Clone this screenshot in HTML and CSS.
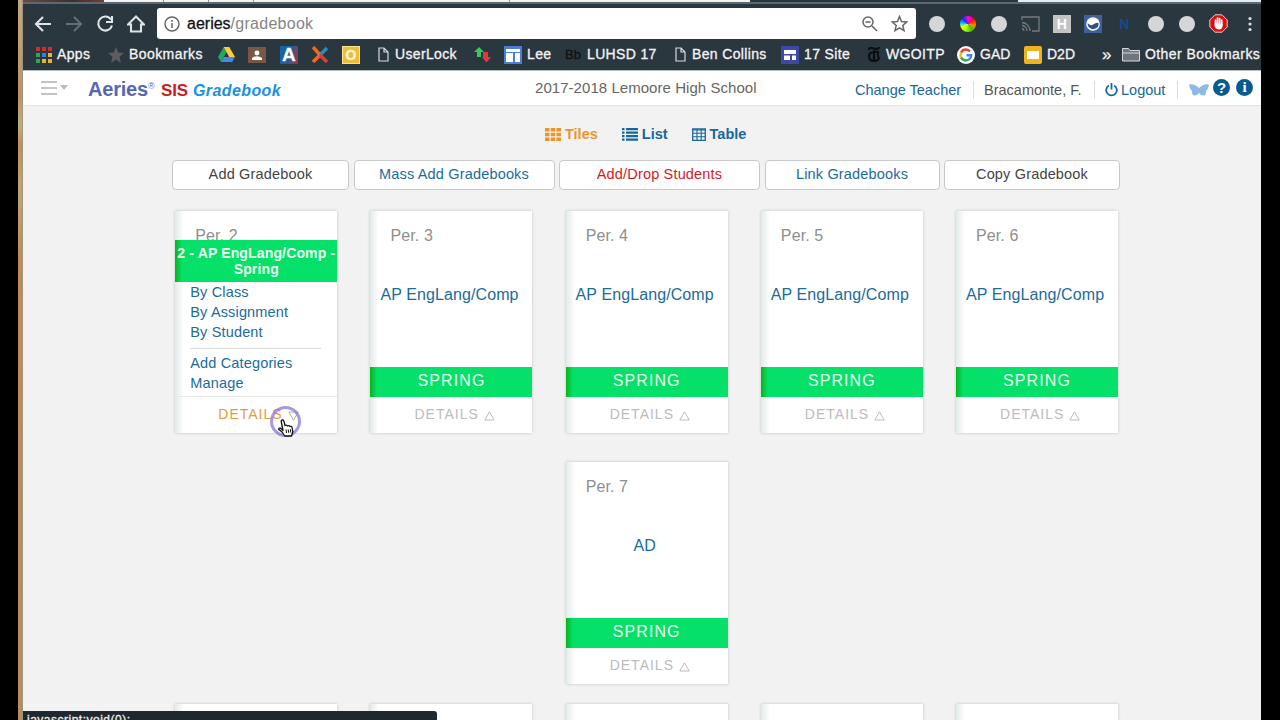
FILE: index.html
```html
<!DOCTYPE html>
<html lang="en">
<head>
    <meta charset="UTF-8">
    <title>Aeries Gradebook</title>
    <link rel="stylesheet" href="styles.css">
</head>
<body>
<div class="desktop"></div>
<div class="browser">
    <div class="tabs"><i class="photo"></i><i class="tab t1"></i><i class="tab t2"></i><i class="tab t3"></i><i class="tab t4"></i><i class="active"></i><i class="tab t5"></i></div>

    <div class="toolbar">
        <div class="nav">
            <svg width="18" height="18" viewBox="0 0 18 18"><path d="M17 9H2M9 2L2 9l7 7"/></svg>
            <svg class="dim" width="18" height="18" viewBox="0 0 18 18"><path d="M1 9h15M9 2l7 7-7 7"/></svg>
            <svg width="18" height="18" viewBox="0 0 18 18"><path d="M15 4.500A7 7 0 1 0 16 10.500M16 1v6h-6"/></svg>
            <svg width="18" height="18" viewBox="0 0 18 18"><path d="M1 9.500L9 1.500l8 8h-3v7H4v-7z"/></svg>
        </div>
        <div class="omnibox">
            <svg width="16" height="16" viewBox="0 0 16 16"><circle cx="8" cy="8" r="7"/><path d="M8 7v5M8 4v1.700"/></svg>
            <span class="url"><b>aeries</b>/gradebook</span>
            <svg width="17" height="17" viewBox="0 0 17 17"><circle cx="7" cy="7" r="5"/><path d="M4.500 7h5M11 11l5 5"/></svg>
            <svg width="17" height="17" viewBox="0 0 17 17"><path d="M8.500 1.500l2 5 5.300.4-4 3.500 1.200 5.200-4.500-2.800L4 15.600l1.200-5.200-4-3.500 5.300-.4z"/></svg>
        </div>
        <div class="extensions">
            <i class="ball"></i>
            <i class="wheel"></i>
            <i class="ball"></i>
            <svg width="19" height="16" viewBox="0 0 19 16" fill="none" stroke="#77797c" stroke-width="1.300"><path d="M1 4V1h17v14h-7M1 6.500a8.500 8.500 0 0 1 8 8.500M1 9.500A5.500 5.500 0 0 1 6 15M1 12.500A2.500 2.500 0 0 1 3 15"/></svg>
            <b class="ext-h">H</b>
            <svg width="18" height="18" viewBox="0 0 18 18"><path fill="#3f619b" d="M0 0h18v18H0z"/><circle cx="9" cy="9" r="6.800" fill="#fff"/><path fill="#34517f" d="M3.500 8q3 3.500 6 1.300T14.500 8q1 5.500-5.500 6.300Q3.500 13.500 3.500 8z"/></svg>
            <b class="ext-n">N</b>
            <i class="ball"></i>
            <i class="ball"></i>
            <svg width="19" height="19" viewBox="0 0 19 19"><path fill="#d51115" stroke="#f4c7c7" d="M6 .8h7L18.200 6v7L13 18.200H6L.8 13V6z"/><path fill="none" stroke="#fff" stroke-width="1.700" stroke-linecap="round" d="M6.500 11V6M8.500 10V4M10.600 10V4.500M12.700 11V6"/><path fill="#fff" d="M5.800 9.500h7.700v3Q13 15.500 10 15.500T5.800 12.500z"/></svg>
            <svg width="4" height="16" viewBox="0 0 4 16" fill="#dcdfe1"><circle cx="2" cy="2.500" r="1.600"/><circle cx="2" cy="8" r="1.600"/><circle cx="2" cy="13.500" r="1.600"/></svg>
        </div>
    </div>

    <div class="bookmarks">
        <span class="bm"><svg width="16" height="17" viewBox="0 0 16 17"><path fill="#d92b26" d="M0 1h4v4H0zM6 1h4v4H6zM12 1h4v4h-4z"/><path fill="#2fa45a" d="M0 7h4v4H0zM0 13h4v4H0z"/><path fill="#2985d8" d="M6 7h4v4H6z"/><path fill="#e8b238" d="M12 7h4v4h-4zM6 13h4v4H6zM12 13h4v4h-4z"/></svg><span>Apps</span></span>
        <span class="bm"><svg width="16" height="16" viewBox="0 0 16 16"><path fill="#5b5c5e" d="M8 0l2.200 5.600 5.800.4-4.500 3.800L13 16l-5-3.400L3 16l1.500-6.200L0 6l5.800-.4z"/></svg><span class="wide">Bookmarks</span></span>
        <span class="bm"><svg width="17" height="15" viewBox="0 0 17 15"><path fill="#23a566" d="M5.700 0L0 10l3 5 5.500-9.800z"/><path fill="#fcce3c" d="M5.700 0h5.600L17 10h-5.800z"/><path fill="#4688f1" d="M3 15l3-5h11l-3 5z"/></svg></span>
        <span class="bm"><svg width="18" height="16" viewBox="0 0 18 16"><path fill="#7c5644" d="M0 0h18v16H0z"/><circle cx="9" cy="6" r="2.400" fill="#fff"/><path fill="#fff" d="M4 13v-2q5-3.500 10 0v2z"/></svg></span>
        <span class="bm"><b class="fav-a">A</b></span>
        <span class="bm"><svg width="16" height="17" viewBox="0 0 16 17" fill="none" stroke-width="3.500"><path stroke="#ed6a24" d="M1 1l7 8M1 16l7-7"/><path stroke="#3586be" d="M15 2L9 8"/><path stroke="#df3e2c" d="M8 9l7 7"/></svg></span>
        <span class="bm"><b class="fav-o">O</b></span>
        <span class="bm file"><svg class="doc" width="12" height="15" viewBox="0 0 12 15"><path d="M2 1h5l4 4v9H2zM7 1v4h4"/></svg><span>UserLock</span></span>
        <span class="bm"><svg width="17" height="17" viewBox="0 0 17 17"><path fill="#35ca60" d="M5 1l5 5H7v5H3V6H0z"/><path fill="#e5363b" d="M9 6h5v5h3l-4.500 5.500L8 11h1z"/></svg></span>
        <span class="bm"><svg width="18" height="18" viewBox="0 0 18 18"><path fill="#4b7fd1" d="M0 0h18v18H0z"/><path fill="#fff" d="M2 3h14v3H2zM2 7h7v9H2zM11 7h5v9h-5z"/></svg><span>Lee</span></span>
        <span class="bm"><b class="fav-bb">Bb</b><span>LUHSD 17</span></span>
        <span class="bm file"><svg class="doc" width="12" height="15" viewBox="0 0 12 15"><path d="M2 1h5l4 4v9H2zM7 1v4h4"/></svg><span>Ben Collins</span></span>
        <span class="bm"><svg width="18" height="18" viewBox="0 0 18 18"><path fill="#3c4aa6" d="M0 0h18v18H0z"/><path fill="#fff" d="M3 4h12v4H3zM3 9.500h6V14H3zM11 9.500h4V14h-4z"/></svg><span>17 Site</span></span>
        <span class="bm"><svg width="14" height="17" viewBox="0 0 14 17" fill="none" stroke="#0b0e10" stroke-width="2.200"><path d="M2 4q0-3 3-2l4 1q3 0 3-2M12 6Q2 5 2 10t5 5q5 0 5-4M7 4v10M11 6v5"/></svg><span>WGOITP</span></span>
        <span class="bm"><svg width="18" height="18" viewBox="0 0 18 18"><circle cx="9" cy="9" r="9" fill="#fff"/><g fill="none" stroke-width="2.400"><path stroke="#e94235" d="M4 6.500Q6.500 2.500 11 4l2 1.300"/><path stroke="#fabb05" d="M4 6.500q-1.200 2.500 0 5"/><path stroke="#34a853" d="M4 11.500Q7 16 12 13.500"/><path stroke="#4285f4" d="M12 13.500q2.200-1.500 2.200-4.300H9.500"/></g></svg><span class="tight">GAD</span></span>
        <span class="bm"><svg width="18" height="18" viewBox="0 0 18 18"><rect width="18" height="18" rx="2" fill="#edb41d"/><path fill="#fff" d="M3 5h12v8H3z"/></svg><span class="tight">D2D</span></span>
        <span class="bm more">»</span>
        <span class="bm"><svg width="18" height="15" viewBox="0 0 18 15"><path fill="#6f777e" stroke="#d7dadc" d="M.5 14V1.500h6l1.500 2h9.500V14zM.5 6h17"/></svg><span class="wide">Other Bookmarks</span></span>
    </div>

    <div class="header">
        <div class="menu-button"><svg width="28" height="16" viewBox="0 0 28 16"><path fill="none" stroke="#c3c3c3" stroke-width="2" d="M0 2h16M0 8h16M0 14h16"/><path fill="#bbb" d="M19 5h8l-4 5z"/></svg></div>
        <div class="logo"><span class="aeries">Aeries<sup>®</sup></span><span class="sis">SIS</span><span class="product">Gradebook</span></div>
        <div class="school">2017-2018 Lemoore High School</div>
        <div class="user">
            <a class="change">Change Teacher</a>
            <span class="teacher">Bracamonte, F.</span>
            <a class="logout"><svg width="13" height="14" viewBox="0 0 13 14" fill="none" stroke="#19679a" stroke-width="1.800"><path d="M4 2.500a5.300 5.300 0 1 0 5 0M6.500 0v6.500"/></svg><span>Logout</span></a>
            <span class="help">
                <svg width="20" height="14" viewBox="0 0 20 14"><path fill="#8fb9e6" d="M10 5Q5 0 0 1.500q1 5 3 6.500-.5 3 2 4.500 3 .5 5-2.500 2 3 5 2.500 2.500-1.500 2-4.500 2-1.500 3-6.500Q15 0 10 5z"/></svg>
                <b class="dot">?</b>
                <b class="dot info">i</b>
            </span>
        </div>
    </div>

    <div class="page">
        <div class="views">
            <a class="on"><svg width="16" height="13" viewBox="0 0 16 13" fill="#ee9429"><path d="M0 0h4.500v3.500H0zM5.700 0h4.500v3.500H5.700zM11.400 0H16v3.500h-4.600zM0 4.700h4.500v3.500H0zM5.700 4.700h4.500v3.500H5.700zM11.400 4.700H16v3.500h-4.600zM0 9.400h4.500V13H0zM5.700 9.400h4.500V13H5.700zM11.400 9.400H16V13h-4.600z"/></svg><span>Tiles</span></a>
            <a><svg width="16" height="13" viewBox="0 0 16 13" fill="#19679a"><path d="M0 0h2.500v2.300H0zM4 0h12v2.300H4zM0 3.500h2.500v2.300H0zM4 3.500h12v2.300H4zM0 7h2.500v2.300H0zM4 7h12v2.300H4zM0 10.500h2.500v2.300H0zM4 10.500h12v2.300H4z"/></svg><span>List</span></a>
            <a><svg width="14" height="13" viewBox="0 0 14 13" fill="none" stroke="#19679a"><path stroke-width="1.300" d="M.7 1h12.600v11.300H.7z"/><path stroke-width="1.100" d="M1 2h12M1 5.200h12M1 8.700h12M5 1v11M9.200 1v11"/></svg><span>Table</span></a>
        </div>

        <div class="actions">
            <a class="dark">Add Gradebook</a>
            <a>Mass Add Gradebooks</a>
            <a class="red">Add/Drop Students</a>
            <a>Link Gradebooks</a>
            <a class="dark">Copy Gradebook</a>
        </div>

        <div class="tiles">
            <div class="tile open">
                <div class="period">Per. 2</div>
                <div class="flyout">
                    <div class="flyout-title">2 - AP EngLang/Comp -<br>Spring</div>
                    <ul>
                        <li>By Class</li>
                        <li>By Assignment</li>
                        <li>By Student</li>
                        <li class="split">Add Categories</li>
                        <li>Manage</li>
                    </ul>
                </div>
                <div class="details">DETAILS <svg width="11" height="10" viewBox="0 0 11 10"><path d="M.8 1h9.400L5.500 9.300z"/></svg></div>
            </div>
            <div class="tile">
                <div class="period">Per. 3</div>
                <div class="course">AP EngLang/Comp</div>
                <div class="term">SPRING</div>
                <div class="details">DETAILS <svg width="11" height="10" viewBox="0 0 11 10"><path d="M.8 9h9.400L5.500.8z"/></svg></div>
            </div>
            <div class="tile">
                <div class="period">Per. 4</div>
                <div class="course">AP EngLang/Comp</div>
                <div class="term">SPRING</div>
                <div class="details">DETAILS <svg width="11" height="10" viewBox="0 0 11 10"><path d="M.8 9h9.400L5.500.8z"/></svg></div>
            </div>
            <div class="tile">
                <div class="period">Per. 5</div>
                <div class="course">AP EngLang/Comp</div>
                <div class="term">SPRING</div>
                <div class="details">DETAILS <svg width="11" height="10" viewBox="0 0 11 10"><path d="M.8 9h9.400L5.500.8z"/></svg></div>
            </div>
            <div class="tile">
                <div class="period">Per. 6</div>
                <div class="course">AP EngLang/Comp</div>
                <div class="term">SPRING</div>
                <div class="details">DETAILS <svg width="11" height="10" viewBox="0 0 11 10"><path d="M.8 9h9.400L5.500.8z"/></svg></div>
            </div>
        </div>

        <div class="tiles second">
            <div class="tile">
                <div class="period">Per. 7</div>
                <div class="course">AD</div>
                <div class="term">SPRING</div>
                <div class="details">DETAILS <svg width="11" height="10" viewBox="0 0 11 10"><path d="M.8 9h9.400L5.500.8z"/></svg></div>
            </div>
        </div>

        <div class="tiles third">
            <div class="tile"></div>
            <div class="tile"></div>
            <div class="tile"></div>
            <div class="tile"></div>
            <div class="tile"></div>
        </div>
    </div>
</div>

<div class="status">javascript:void(0);</div>
<div class="click-ring"></div>
<svg class="pointer" width="16" height="18" viewBox="0 0 16 18"><path fill="#fff" stroke="#111" stroke-width="1.300" stroke-linejoin="round" d="M5 11.500L3.300 3q-.3-1.800 1-2t1.700 1.400L7 6.500q1.500-1 2.500.5 1.500-1 2.500.5 1.800-.6 2.200 1.500l.6 3.500-1.300 4.500H6.800L4 13 .8 10.500q-.4-1.700 1.700-1.300z"/><path stroke="#111" d="M8 10.500l.6 3.500M10.200 10.500l.5 3.300M12.400 10.300l.3 3.200"/></svg>
</body>
</html>
```
FILE: styles.css
```css
* {
    box-sizing: border-box;
    margin: 0;
    padding: 0;
}
body {
    width: 1280px;
    height: 720px;
    overflow: hidden;
    position: relative;
    display: flex;
    background: #000;
    font-family: "Liberation Sans", Arial, sans-serif;
}
svg {
    display: block;
    flex: none;
}
.desktop {
    width: 5px;
    margin-left: 18px;
    background: linear-gradient(#c3aa80 0, #b99a70 70px, #c18f66 95px, #bcae80 125px, #c28e5c 145px, #bda770 190px, #c08a58 260px, #b98c61 100%);
    border-right: 1px solid #a0937c;
}
.browser {
    width: 1238px;
    height: 720px;
    overflow: hidden;
    background: #f2f2f2;
}

/* tab strip */
.tabs {
    display: flex;
    height: 4px;
    background: #f1f2f2;
    border-bottom: 2px solid #5c6971;
}
.photo {
    width: 81px;
    background: linear-gradient(90deg, #70493c, #3b3030 60%, #7a3c2f);
}
.tab {
    border-right: 1px solid #8b8f92;
}
.t1 { width: 60px; }
.t2 { width: 45px; }
.t3 { width: 45px; }
.t4 { width: 256px; }
.t5 {
    width: 243px;
    margin-left: auto;
    background: #e4eaf5;
    border: 0;
    box-shadow: -268px 0 0 #2b373f, -100px 0 0 #2b373f;
}
.active { width: 240px; }

/* toolbar */
.toolbar {
    display: flex;
    align-items: center;
    height: 39px;
    background: #2b373f;
}
.nav {
    display: flex;
    flex: none;
    gap: 13px;
    width: 134px;
    padding-left: 11px;
}
.nav path {
    fill: none;
    stroke: #dfe3e6;
    stroke-width: 2.1;
}
.nav .dim path { stroke: #656d73; }
.omnibox {
    display: flex;
    flex: none;
    align-items: center;
    width: 759px;
    height: 31px;
    padding: 0 8px 0 7px;
    background: #fff;
    border-radius: 3px;
}
.omnibox svg path,
.omnibox svg circle {
    fill: none;
    stroke: #666;
    stroke-width: 1.5;
}
.omnibox svg + svg { margin-left: 13px; }
.url {
    flex: 1;
    margin-left: 7px;
    color: #858585;
    font-size: 16px;
    letter-spacing: .27px;
}
.url b {
    color: #111;
    font-weight: normal;
    letter-spacing: 0;
    -webkit-text-stroke: .3px #111;
}
.extensions {
    display: grid;
    grid-template-columns: repeat(11, 31.3px);
    align-items: center;
    justify-items: center;
    padding-left: 5px;
}
.ball {
    width: 16px;
    height: 16px;
    border-radius: 50%;
    background: #d5d6d8;
}
.wheel {
    width: 16px;
    height: 16px;
    border-radius: 50%;
    background: conic-gradient(#f0f, #f02 12%, #f80 28%, #4b0 40%, #9f0 55%, #ff0 68%, #0df 76%, #22f 88%, #f0f);
}
.ext-h {
    width: 18px;
    height: 18px;
    background: #c1c3c5;
    color: #fff;
    font-size: 14px;
    line-height: 18px;
    text-align: center;
}
.ext-n {
    color: #124c8c;
    font-size: 14px;
}

/* bookmarks */
.bookmarks {
    display: grid;
    grid-template-columns: 72px 110px 30px 32px 32px 30px 35px 97px 30px 61px 109px 107px 86px 90px 67px 78px 20px 140px;
    align-items: center;
    height: 27px;
    padding-left: 13px;
    padding-bottom: 4px;
    background: #2b373f;
    color: #f3f4f5;
    font-size: 14px;
    letter-spacing: .35px;
    line-height: 16px;
    white-space: nowrap;
    -webkit-text-stroke: .3px #f3f4f5;
}
.bm {
    display: flex;
    align-items: center;
    gap: 5px;
}
.bm > span { margin-top: -1px; }
.bm .wide { letter-spacing: .42px; }
.bm .tight { letter-spacing: 0; }
.file { gap: 6px; }
.doc {
    fill: none;
    stroke: #d7dadc;
    stroke-width: 1.2;
}
.fav-a {
    width: 18px;
    height: 18px;
    background: linear-gradient(110deg, #1763a4 45%, #b5283a);
    color: #fff;
    font-size: 19px;
    line-height: 18px;
    text-align: center;
}
.fav-o {
    width: 18px;
    height: 18px;
    background: #efbd38;
    border: 1px solid #ffe295;
    color: #fff6cd;
    line-height: 16px;
    text-align: center;
}
.fav-bb {
    width: 17px;
    color: #0d1114;
    font-size: 13px;
    font-weight: normal;
    letter-spacing: 0;
    -webkit-text-stroke: .3px #0d1114;
}
.more { font-size: 17px; }

/* page header */
.header {
    display: flex;
    height: 36px;
    padding-left: 18px;
    background: #fff;
    border-top: 1px solid #b5babd;
    border-bottom: 1px solid #e4e4e4;
}
.menu-button {
    width: 47px;
    padding-top: 9px;
}
.logo {
    display: flex;
    align-items: baseline;
    width: 447px;
    padding-top: 7px;
    font-weight: bold;
}
.aeries {
    width: 73px;
    color: #5467b4;
    font-size: 20px;
    letter-spacing: -.2px;
}
.aeries sup {
    font-size: 9px;
    font-weight: normal;
    line-height: 0;
    vertical-align: 7px;
}
.sis {
    width: 32px;
    color: #c71c20;
    font-size: 17px;
    letter-spacing: -.2px;
}
.product {
    color: #1792e0;
    font-size: 16px;
    font-style: italic;
    letter-spacing: .4px;
}
.school {
    width: 320px;
    padding-top: 8px;
    color: #666;
    font-size: 15px;
    letter-spacing: .05px;
}
.user {
    display: flex;
    padding-top: 10px;
    color: #555;
    font-size: 14.5px;
    line-height: 18px;
    white-space: nowrap;
}
.user > :not(:last-child) {
    height: 18px;
    border-right: 1px solid #ddd;
}
.change {
    width: 119px;
    color: #19679a;
}
.teacher {
    width: 121px;
    padding-left: 10px;
}
.logout {
    display: flex;
    align-items: center;
    gap: 3px;
    width: 83px;
    padding-left: 10px;
    color: #19679a;
}
.help {
    display: flex;
    gap: 4px;
    margin-top: -2px;
    padding-left: 11px;
}
.help svg { margin-top: 4px; }
.dot {
    width: 17px;
    height: 17px;
    border-radius: 50%;
    background: #075b8e;
    color: #fff;
    font-size: 15px;
    line-height: 17px;
    text-align: center;
}
.info {
    margin-left: 2px;
    font-family: "Liberation Serif", serif;
}

/* view switch */
.views {
    display: flex;
    gap: 24px;
    padding: 18px 0 0 522px;
    font-size: 14.5px;
    font-weight: bold;
    line-height: 20px;
}
.views a {
    display: flex;
    align-items: center;
    gap: 4px;
    color: #19679a;
}
.views .on { color: #ee9429; }

/* buttons */
.actions {
    display: grid;
    grid-template-columns: 177px 201px 201px 175px 176px;
    gap: 4.5px;
    padding: 16px 0 0 149px;
}
.actions a {
    height: 30px;
    background: #fff;
    border: 1px solid #c9c9c9;
    border-radius: 4px;
    color: #1b6b9c;
    font-size: 14.5px;
    letter-spacing: .17px;
    line-height: 26px;
    text-align: center;
}
.actions .dark { color: #444; }
.actions .red { color: #d9191f; }

/* tiles */
.tiles {
    display: grid;
    grid-template-columns: repeat(5, 162px);
    column-gap: 33.2px;
    padding: 21px 0 0 152.3px;
}
.tile {
    display: flex;
    flex-direction: column;
    height: 222px;
    background: linear-gradient(90deg, #e3eaea, #fff 9px);
    box-shadow: 0 0 3px rgba(0, 0, 0, .2);
}
.period {
    height: 67px;
    padding: 15px 0 0 20px;
    color: #8e8e8e;
    font-size: 16px;
    letter-spacing: .1px;
    line-height: 19px;
}
.course {
    height: 89px;
    padding: 7px 4px 0 0;
    color: #1b6b9c;
    font-size: 16px;
    letter-spacing: .1px;
    line-height: 20px;
    text-align: center;
}
.term {
    height: 30px;
    background: linear-gradient(90deg, #05b51c, #05e069 7px);
    color: #e8fff0;
    font-size: 16px;
    letter-spacing: 1.1px;
    line-height: 28px;
    text-align: center;
}
.details {
    display: flex;
    align-items: center;
    gap: 5px;
    height: 36px;
    padding: 0 0 2px 44px;
    color: #bcbcbc;
    font-size: 14px;
    letter-spacing: 1px;
}
.details svg {
    margin-top: 3px;
    fill: none;
    stroke: #bcbcbc;
}
.open .period {
    height: 29px;
    overflow: hidden;
}
.open .details {
    padding-left: 43px;
    color: #e69b3c;
}
.open .details svg { stroke: #b9b190; }
.flyout {
    height: 157px;
    border-bottom: 1px solid #e7e9e9;
    color: #1b6b9c;
    font-size: 14.5px;
    letter-spacing: .15px;
    line-height: 20px;
}
.flyout-title {
    height: 42px;
    padding-top: 6px;
    background: linear-gradient(90deg, #05b51c, #05e069 7px);
    color: #f0fff3;
    font-size: 14px;
    font-weight: bold;
    line-height: 15.5px;
    text-align: center;
    white-space: nowrap;
}
.flyout ul {
    padding: 0 16px 0 15px;
    list-style: none;
}
.split {
    margin-top: 6px;
    padding-top: 4px;
    border-top: 1px solid #d9d9d9;
}
.second { padding-top: 29px; }
.second .tile { grid-column: 3; }
.third { padding-top: 20px; }

/* overlays */
.status {
    position: absolute;
    left: 23px;
    top: 711px;
    width: 414px;
    height: 18px;
    padding: 2px 4px;
    background: #20282f;
    border-radius: 0 3px 0 0;
    color: #eee;
    font-size: 12px;
    letter-spacing: .5px;
    line-height: 15px;
    -webkit-text-stroke: .3px #eee;
}
.click-ring {
    position: absolute;
    left: 270px;
    top: 406px;
    width: 31px;
    height: 31px;
    border: 3px solid rgba(135, 119, 214, .75);
    border-radius: 50%;
}
.pointer {
    position: absolute;
    left: 278px;
    top: 419px;
}
```
